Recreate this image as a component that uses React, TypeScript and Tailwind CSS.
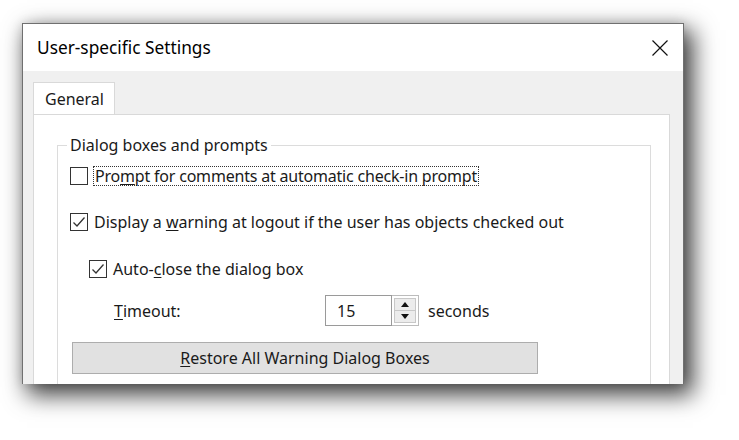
import React from 'react';

const font = { fontFamily: '"Noto Sans", "Open Sans", sans-serif' };

const CheckBox = ({ checked }: { checked?: boolean }) => (
  <span className="flex h-[18px] w-[18px] shrink-0 items-center justify-center border border-[#333333] bg-white">
    {checked && (
      <svg width="16" height="16" viewBox="0 0 16 16" fill="none">
        <path d="M2.5 8.5 L6 12 L13.5 3.5" stroke="#333333" strokeWidth="1.3" />
      </svg>
    )}
  </span>
);

const Key = ({ children }: { children: React.ReactNode }) => (
  <span className="underline underline-offset-2 decoration-1">{children}</span>
);

const App: React.FC = () => {
  return (
    <div className="h-[440px] w-[739px] overflow-hidden bg-white pl-[22px] pt-[23px] text-[16px] text-[#1a1a1a]" style={font}>
      <div className="flex h-[361px] w-[662px] flex-col overflow-hidden border-x border-t border-[#707070] bg-[#f0f0f0] shadow-[7px_9px_22px_2px_rgba(0,0,0,0.75),0_0_10px_rgba(0,0,0,0.12)]">
        {/* title bar */}
        <div className="flex h-[47px] shrink-0 items-center justify-between bg-white pl-[14px] pr-[15px]">
          <span className="text-[17.3px] text-black">User-specific Settings</span>
          <svg width="16" height="16" viewBox="0 0 16 16" fill="none">
            <path d="M0.5 0.5 L15.5 15.5 M15.5 0.5 L0.5 15.5" stroke="#111111" strokeWidth="1.2" />
          </svg>
        </div>

        {/* body */}
        <div className="flex flex-1 flex-col pl-[10px] pr-[13px] pt-[11px]">
          <div className="flex">
            <div className="-mb-px flex h-[33px] w-[82px] items-center border-x border-t border-[#d9d9d9] bg-white pl-[11px] pb-[1px]">
              General
            </div>
          </div>
          <div className="flex-1 border border-[#d9d9d9] bg-white pl-[23px] pr-[18px] pt-[20px]">
            <fieldset className="border border-[#dcdcdc] pb-6">
              <legend className="ml-[9px] px-[3px] leading-[20px]">Dialog boxes and prompts</legend>

              <div className="pl-[12px]">
                <div className="mt-[11px] flex h-[20px] items-center gap-[5px]">
                  <CheckBox />
                  <span className="border border-dotted border-[#333] px-[1px] leading-[18px] tracking-[-0.2px]">
                    Pro<Key>m</Key>pt for comments at automatic check-in prompt
                  </span>
                </div>

                <div className="mt-[26px] flex h-[20px] items-center gap-[6px]">
                  <CheckBox checked />
                  <span>
                    Display a <Key>w</Key>arning at logout if the user has objects checked out
                  </span>
                </div>

                <div className="mt-[27px] flex h-[20px] items-center gap-[6px] pl-[19px]">
                  <CheckBox checked />
                  <span>
                    Auto-<Key>c</Key>lose the dialog box
                  </span>
                </div>

                <div className="mt-[16px] flex h-[31px] items-center pl-[44px]">
                  <span className="w-[211px]">
                    <Key>T</Key>imeout:
                  </span>
                  <div className="flex h-[31px] w-[67px] items-center border border-[#9a9a9a] pl-[11px]">15</div>
                  <div className="flex h-[31px] w-[27px] flex-col border border-l-0 border-[#bcbcbc] bg-white p-[2px]">
                    <div className="flex flex-1 items-center justify-center border border-[#c8c8c8] bg-[#ececec]">
                      <svg width="8" height="5" viewBox="0 0 8 5"><path d="M4 0 L8 5 L0 5 Z" fill="#111" /></svg>
                    </div>
                    <div className="flex flex-1 items-center justify-center border border-t-0 border-[#c8c8c8] bg-[#ececec]">
                      <svg width="8" height="5" viewBox="0 0 8 5"><path d="M0 0 L8 0 L4 5 Z" fill="#111" /></svg>
                    </div>
                  </div>
                  <span className="ml-[9px]">seconds</span>
                </div>

                <div className="ml-[2px] mt-[16px] flex h-[32px] w-[466px] items-center justify-center border border-[#adadad] bg-[#e1e1e1]">
                  <Key>R</Key>estore All Warning Dialog Boxes
                </div>
              </div>
            </fieldset>
          </div>
        </div>
      </div>
    </div>
  );
};

export default App;
